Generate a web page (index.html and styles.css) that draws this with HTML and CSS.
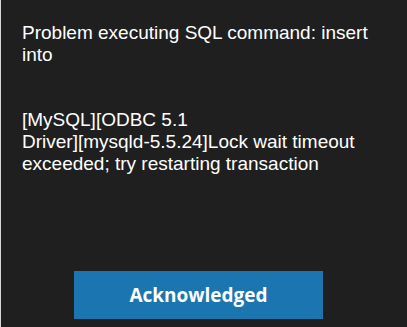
FILE: index.html
```html
<!DOCTYPE html>
<html>
<head>
<meta charset="utf-8">
<link rel="stylesheet" href="styles.css">
</head>
<body>
<div class="dialog">
  <p class="msg">Problem executing SQL command: insert into</p>
  <p class="msg detail">[MySQL][ODBC 5.1 Driver]&#8288;[&#8288;mysqld-&#8288;5.5.24]&#8288;Lock wait timeout exceeded; try restarting transaction</p>
  <div class="actions">
    <button class="ack">Acknowledged</button>
  </div>
</div>
</body>
</html>
```
FILE: styles.css
```css
html, body {
  margin: 0;
  padding: 0;
  background: #1f1f1f;
}
.dialog {
  box-sizing: border-box;
  height: 327px;
  display: flex;
  flex-direction: column;
  padding: 22px 20px 8px 21px;
  border-left: 1px solid #d8d8d8;
  background: #1f1f1f;
}
.msg {
  margin: 0;
  font-family: "Liberation Sans", Arial, sans-serif;
  font-size: 19px;
  line-height: 22px;
  color: #ffffff;
  width: 352px;
}
.detail {
  margin-top: 43px;
}
.actions {
  margin-top: auto;
  display: flex;
  padding-left: 52px;
}
.ack {
  width: 249px;
  height: 48px;
  border: none;
  background: #1b75b1;
  color: #ffffff;
  font-family: "Open Sans", "Noto Sans", sans-serif;
  font-weight: 700;
  font-size: 19px;
  padding: 0;
  cursor: pointer;
}
```
